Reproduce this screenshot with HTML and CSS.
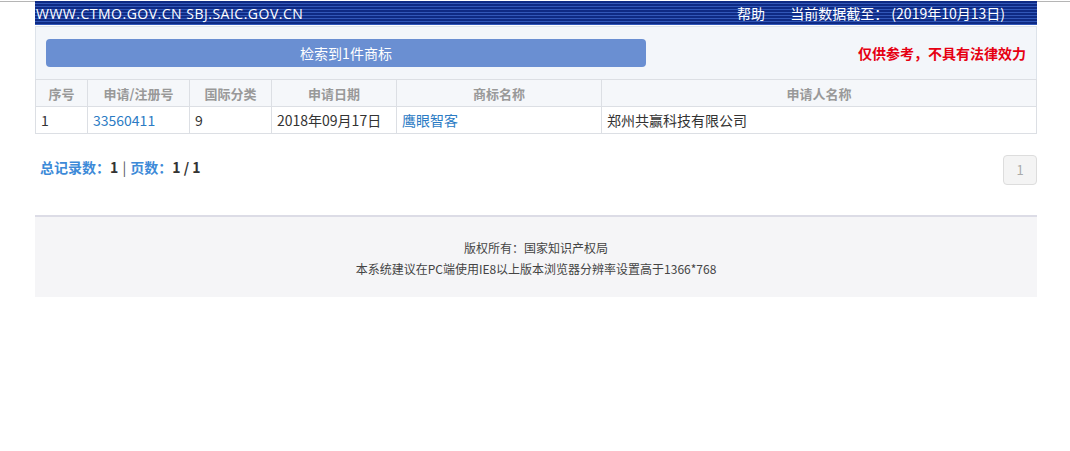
FILE: index.html
```html
<!DOCTYPE html>
<html>
<head>
    <meta charset="UTF-8">
    <title>商标查询</title>
    <link rel="stylesheet" href="styles.css">
</head>
<body>
    <div class="top-line"></div>
    <div class="page">
        <div class="site-header">
            <span class="site-urls">WWW.CTMO.GOV.CN SBJ.SAIC.GOV.CN</span>
            <span class="site-right">
                <span class="help">帮助</span>
                <span class="data-date">当前数据截至： (2019年10月13日)</span>
            </span>
        </div>

        <div class="result-panel">
            <div class="result-count">检索到1件商标</div>
            <div class="notice">仅供参考，不具有法律效力</div>
        </div>

        <table class="result-table">
            <thead>
                <tr>
                    <th class="col-no">序号</th>
                    <th class="col-reg">申请/注册号</th>
                    <th class="col-class">国际分类</th>
                    <th class="col-date">申请日期</th>
                    <th class="col-name">商标名称</th>
                    <th>申请人名称</th>
                </tr>
            </thead>
            <tbody>
                <tr>
                    <td>1</td>
                    <td><a href="#">33560411</a></td>
                    <td>9</td>
                    <td>2018年09月17日</td>
                    <td><a href="#">鹰眼智客</a></td>
                    <td>郑州共赢科技有限公司</td>
                </tr>
            </tbody>
        </table>

        <div class="pager">
            <div class="pager-info">
                <span class="label">总记录数：</span><b>1</b>
                <span class="sep">|</span>
                <span class="label">页数：</span><b>1 / 1</b>
            </div>
            <div class="page-btn">1</div>
        </div>

        <div class="footer">
            <p>版权所有：国家知识产权局</p>
            <p>本系统建议在PC端使用IE8以上版本浏览器分辨率设置高于1366*768</p>
        </div>
    </div>
</body>
</html>
```

FILE: styles.css
```css
body {
    margin: 0;
    font-family: "Noto Sans CJK SC", "Microsoft YaHei", sans-serif;
    font-size: 13px;
    color: #333;
    background-color: #fff;
}

.top-line {
    height: 1px;
    margin-top: 1px;
    background-color: #b5b5b5;
}

.page {
    width: 1002px;
    margin: -2px 0 0 35px;
}

.site-header {
    display: flex;
    justify-content: space-between;
    align-items: center;
    height: 24px;
    padding: 0 32px 0 1px;
    margin-top: 1px;
    color: #fff;
    font-size: 14px;
    background-color: #0e2a84;
    background-image: repeating-linear-gradient(to bottom, #0e2a84 0, #0e2a84 2px, #3157b8 2px, #3157b8 3px);
}

.site-urls {
    font-family: "Open Sans", "Noto Sans CJK SC", sans-serif;
    letter-spacing: 0.5px;
}

.site-right .help {
    margin-right: 22px;
}

.result-panel {
    display: flex;
    justify-content: space-between;
    align-items: center;
    height: 52px;
    padding: 0 10px 0 10px;
    margin-top: 1px;
    background-color: #f3f6fa;
    border: 1px solid #dde3ea;
    border-bottom: none;
}

.result-count {
    width: 600px;
    height: 28px;
    line-height: 28px;
    text-align: center;
    color: #fff;
    font-size: 14px;
    background-color: #6a8fd2;
    border-radius: 4px;
}

.notice {
    color: #e60012;
    font-size: 14px;
    font-weight: bold;
}

.result-table {
    width: 100%;
    border-collapse: collapse;
    font-size: 14px;
}

.result-table th,
.result-table td {
    border: 1px solid #dcdfe4;
    height: 26px;
    padding: 0 5px;
}

.result-table th {
    background-color: #f5f7fa;
    color: #999;
    font-weight: bold;
    font-size: 13px;
    text-align: center;
}

.result-table td {
    text-align: left;
    color: #333;
}

.result-table a {
    color: #2b7bc4;
    text-decoration: none;
}

.col-no { width: 41px; }
.col-reg { width: 91px; }
.col-class { width: 71px; }
.col-date { width: 114px; }
.col-name { width: 194px; }

.pager {
    display: flex;
    justify-content: space-between;
    align-items: flex-start;
    padding: 21px 0 0 5px;
    height: 60px;
}

.pager-info {
    font-size: 14px;
    margin-top: 2px;
}

.pager-info .label {
    color: #3d8ad8;
    font-weight: bold;
}

.pager-info b {
    color: #333;
}

.pager-info .sep {
    color: #555;
    margin: 0 1px;
}

.page-btn {
    width: 32px;
    height: 28px;
    line-height: 28px;
    text-align: center;
    color: #aaa;
    background-color: #f4f4f4;
    border: 1px solid #ddd;
    border-radius: 4px;
}

.footer {
    padding: 20px 0 18px;
    background-color: #f5f5f7;
    border-top: 2px solid #dcdce6;
    text-align: center;
    font-size: 12px;
    color: #444;
}

.footer p {
    margin: 0;
    line-height: 21px;
}
```
